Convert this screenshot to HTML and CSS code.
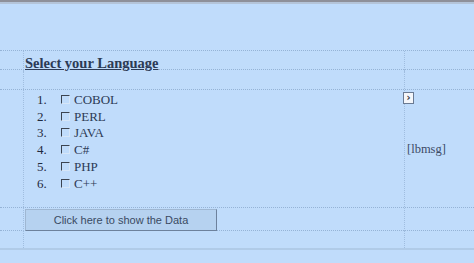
FILE: index.html
```html
<!DOCTYPE html>
<html lang="en">
<head>
    <meta charset="UTF-8">
    <title>Select your Language</title>
    <link rel="stylesheet" href="styles.css">
</head>
<body>
    <div class="top-bar"></div>

    <div class="layout">
        <!-- title row -->
        <div class="row r-title">
            <div class="gutter"></div>
            <div class="cell main"><span class="title">Select your Language</span></div>
            <div class="cell side"></div>
        </div>
        <div class="row r-gap">
            <div class="gutter"></div>
            <div class="cell main"></div>
            <div class="cell side"></div>
        </div>
        <!-- list row -->
        <div class="row r-list">
            <div class="gutter"></div>
            <div class="cell main">
                <ol class="lang-list">
                    <li><span class="chk"></span>COBOL</li>
                    <li><span class="chk"></span>PERL</li>
                    <li><span class="chk"></span>JAVA</li>
                    <li><span class="chk"></span>C#</li>
                    <li><span class="chk"></span>PHP</li>
                    <li><span class="chk"></span>C++</li>
                </ol>
            </div>
            <div class="cell side">
                <span class="tag-icon">&#8250;</span>
                <span class="lbmsg">[lbmsg]</span>
            </div>
        </div>
        <!-- button row -->
        <div class="row r-button">
            <div class="gutter"></div>
            <div class="cell main"><button class="show-btn">Click here to show the Data</button></div>
            <div class="cell side"></div>
        </div>
        <div class="row r-end">
            <div class="gutter"></div>
            <div class="cell main"></div>
            <div class="cell side"></div>
        </div>
    </div>
</body>
</html>
```

FILE: styles.css
```css
body {
    margin: 0;
    background-color: #c0dcfb;
    font-family: "Liberation Serif", "Times New Roman", serif;
    color: #2c3a55;
}
.top-bar {
    height: 2px;
    background-color: #8e9099;
    border-bottom: 2px solid #b4c4d8;
}
.layout {
    margin-top: 46px;
    border-bottom: 2px solid #b0cbe8;
}
.row {
    display: grid;
    grid-template-columns: 24px 381px 1fr;
    border-top: 1px dotted #95b3d6;
}
.gutter {
    border-right: 1px dotted #a0bddf;
}
.main {
    border-right: 1px dotted #a0bddf;
}
.r-title { height: 18px; }
.r-gap { height: 19px; }
.r-list { height: 117px; }
.r-button { height: 22px; }
.r-end { height: 17px; }

.title {
    display: inline-block;
    margin: 4px 0 0 1px;
    font-size: 14.5px;
    font-weight: bold;
    text-decoration: underline;
    line-height: 16px;
}
.lang-list {
    margin: 2px 0 0 0;
    padding-left: 26px;
    font-size: 13px;
    line-height: 16.7px;
}
.lang-list li {
    padding-left: 11px;
}
.lang-list li::marker {
    color: #1f2a3e;
}
.chk {
    display: inline-block;
    width: 7px;
    height: 7px;
    margin-right: 4px;
    border-top: 1px solid #3c4450;
    border-left: 1px solid #3c4450;
    border-right: 1px solid #d6e6f8;
    border-bottom: 1px solid #d6e6f8;
}
.side {
    display: flex;
    flex-direction: column;
}
.tag-icon {
    display: block;
    width: 9px;
    height: 10px;
    margin: 2px 0 0 -2px;
    background-color: #f4f6fa;
    border: 1px solid #6a7a92;
    font-family: "DejaVu Sans", sans-serif;
    font-size: 10px;
    font-weight: bold;
    line-height: 9px;
    text-align: center;
    color: #333;
}
.lbmsg {
    margin: 38px 0 0 2px;
    font-size: 12.5px;
    color: #3c4a66;
}
.show-btn {
    margin: 1px 0 0 1px;
    width: 192px;
    height: 22px;
    background-color: #b6d2f0;
    border: 1px solid #9fb7d2;
    border-right-color: #6d819c;
    border-bottom-color: #6d819c;
    font-family: "Liberation Sans", Arial, sans-serif;
    font-size: 11px;
    color: #3a4a62;
    padding: 0;
}
```
